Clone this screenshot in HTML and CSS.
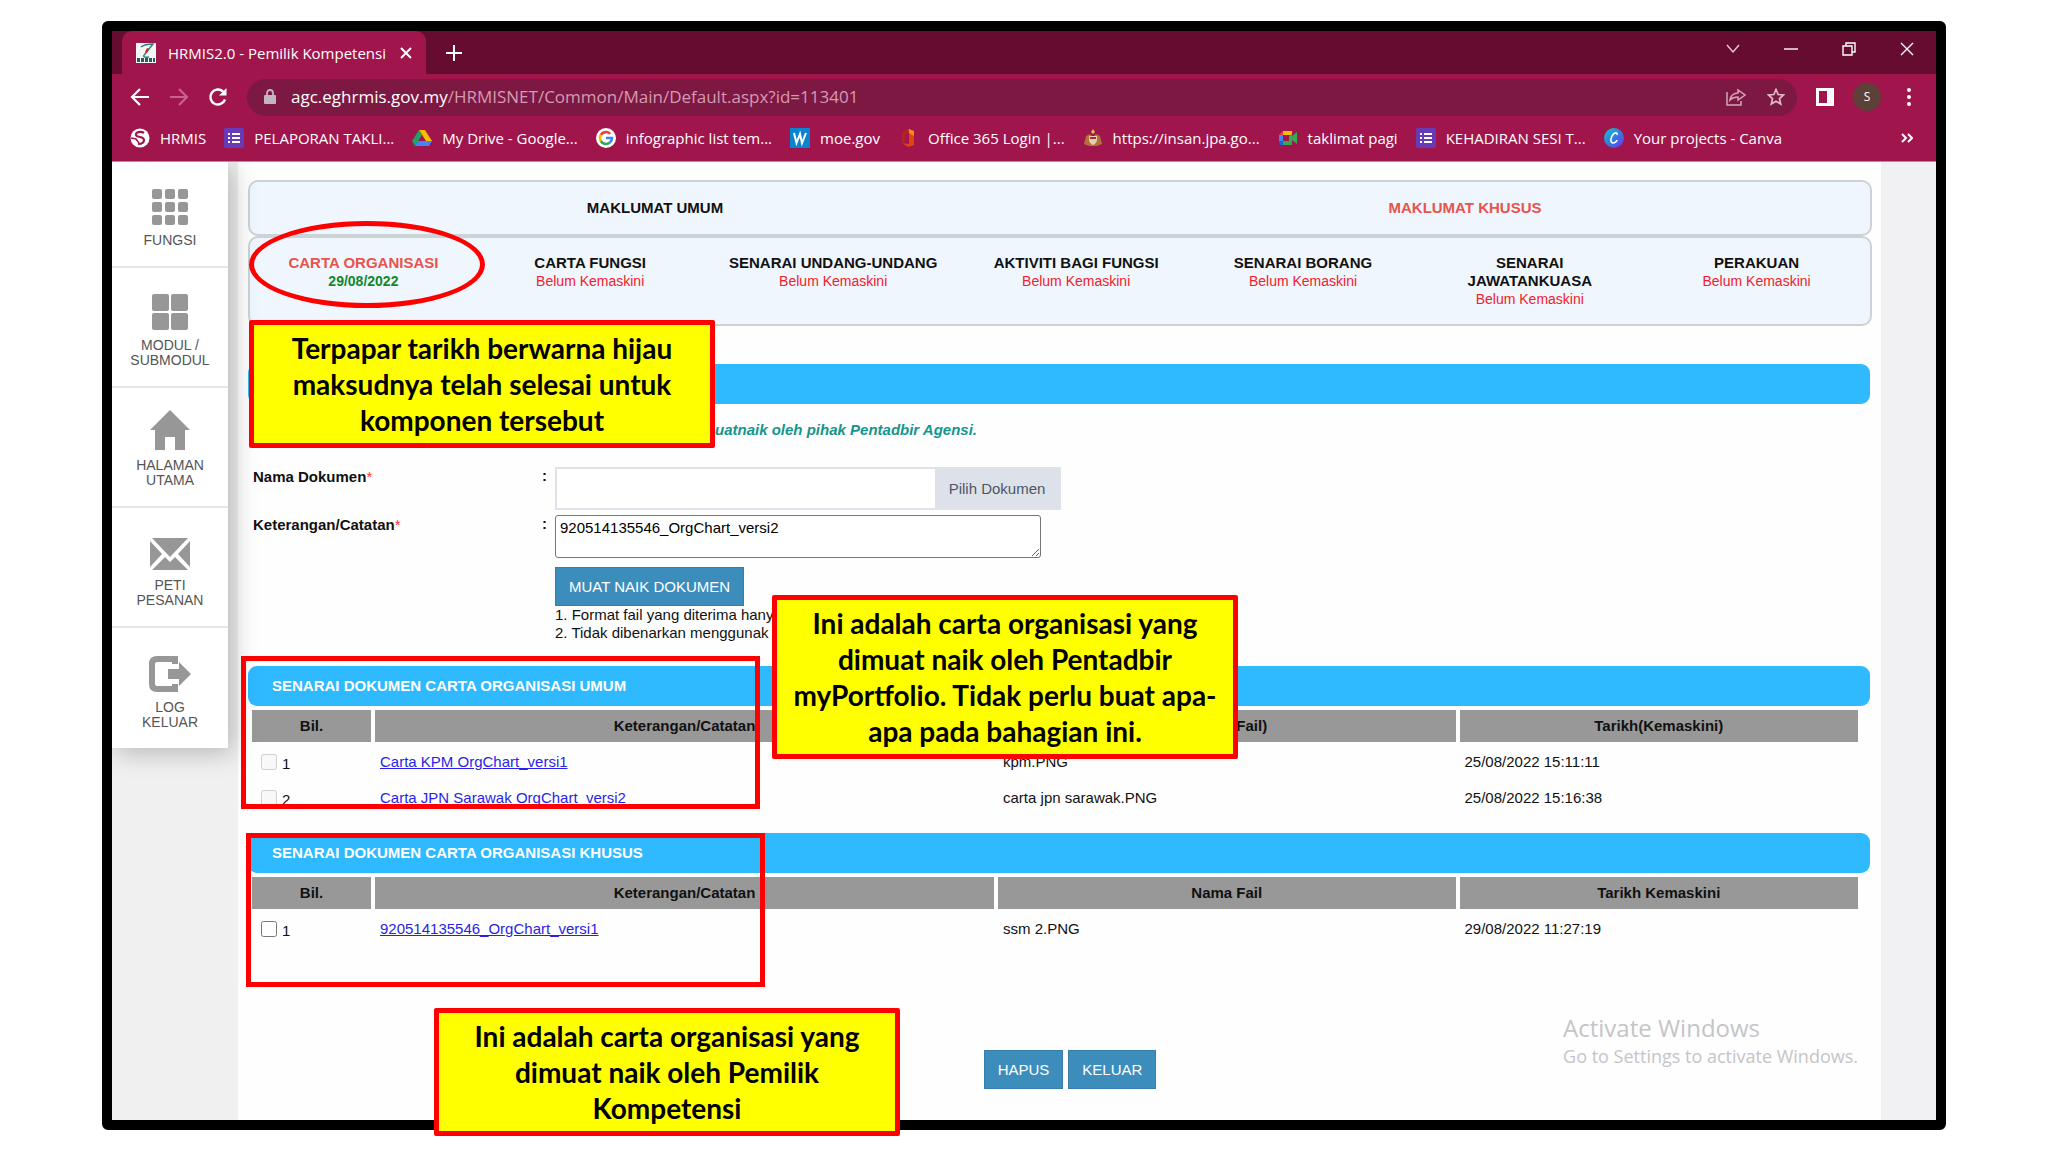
FILE: index.html
```html
<!DOCTYPE html>
<html lang="ms">
<head>
	<meta charset="UTF-8">
	<title>HRMIS2.0 - Pemilik Kompetensi</title>
	<link rel="stylesheet" href="styles.css">
</head>
<body>
	<div class="slide">
		<div class="window">
			<!-- tab strip -->
			<div class="tabstrip">
				<div class="tab">
					<svg class="favicon" viewBox="0 0 20 20"><rect width="20" height="20" fill="#f4f6f5"/><path d="M5 4c4-3 8-3 12-3L9 11c-2 2-2 4 4 3" fill="none" stroke="#2c7f80" stroke-width="1.500"/><path d="M9 9l2-4 2 1-2 4z" fill="#d8231f"/><path d="M1 17h18" stroke="#2b5a5c" stroke-width="4" stroke-dasharray="3 1"/></svg>
					<span>HRMIS2.0 - Pemilik Kompetensi</span>
					<button class="icon-btn close" aria-label="Close tab"><svg width="12" height="12" viewBox="0 0 12 12"><path d="M1 1l10 10M11 1L1 11" stroke="#fff" stroke-width="2"/></svg></button>
				</div>
				<button class="icon-btn newtab" aria-label="New tab"><svg width="16" height="16" viewBox="0 0 16 16"><path d="M8 0v16M0 8h16" stroke="#fff" stroke-width="2"/></svg></button>
				<div class="winbtns">
					<button class="icon-btn" aria-label="Search tabs"><svg width="14" height="14" viewBox="0 0 14 14"><path d="M1 3l6 7 6-7" fill="none" stroke="#e3cdd6" stroke-width="1.4"/></svg></button>
					<button class="icon-btn" aria-label="Minimize"><svg width="14" height="14" viewBox="0 0 14 14"><path d="M0 7h14" stroke="#fff" stroke-width="1.4"/></svg></button>
					<button class="icon-btn" aria-label="Restore"><svg width="14" height="14" viewBox="0 0 14 14"><path d="M1 4h9v9H1zM4 4V1h9v9h-3" fill="none" stroke="#fff" stroke-width="1.4"/></svg></button>
					<button class="icon-btn" aria-label="Close"><svg width="14" height="14" viewBox="0 0 14 14"><path d="M1 1l12 12M13 1L1 13" stroke="#fff" stroke-width="1.4"/></svg></button>
				</div>
			</div>
			<!-- address bar -->
			<div class="toolbar">
				<button class="icon-btn" aria-label="Back"><svg width="20" height="20" viewBox="0 0 20 20"><path d="M19 10H2M10 2l-8 8 8 8" fill="none" stroke="#fff" stroke-width="2.2"/></svg></button>
				<button class="icon-btn" aria-label="Forward"><svg width="20" height="20" viewBox="0 0 20 20"><path d="M1 10h17M10 2l8 8-8 8" fill="none" stroke="#c9608e" stroke-width="2.2"/></svg></button>
				<button class="icon-btn" aria-label="Reload"><svg width="20" height="20" viewBox="0 0 20 20"><path d="M17 12.500a7.500 7.500 0 1 1-2-8" fill="none" stroke="#fff" stroke-width="2.400"/><path d="M18.500 1v7.500H11z" fill="#fff"/></svg></button>
				<div class="address">
					<svg width="12" height="16" viewBox="0 0 12 16"><path d="M3 7V4a3 3 0 0 1 6 0v3" fill="none" stroke="#c3b5c0" stroke-width="1.800"/><rect y="6" width="12" height="9" rx="1" fill="#c3b5c0"/></svg>
					<span class="url"><b>agc.eghrmis.gov.my</b>/HRMISNET/Common/Main/Default.aspx?id=113401</span>
					<button class="icon-btn" aria-label="Share"><svg width="20" height="18" viewBox="0 0 20 18"><path d="M1 4v13h14v-4M4 12c1-5 4-7 8-7V2l7 5-7 5V9c-4 0-6 1-8 3z" fill="none" stroke="#d3a3b8" stroke-width="1.500"/></svg></button>
					<button class="icon-btn" aria-label="Bookmark"><svg width="18" height="18" viewBox="0 0 18 18"><path d="M9 1.500l2.200 5 5.300.5-4 3.600 1.200 5.400L9 13.200 4.300 16l1.200-5.400-4-3.600 5.300-.5z" fill="none" stroke="#e0bccb" stroke-width="1.700"/></svg></button>
				</div>
				<button class="icon-btn" aria-label="Side panel"><svg width="18" height="18" viewBox="0 0 18 18"><path d="M1.500 1.500h15v15h-15z" fill="none" stroke="#fff" stroke-width="3"/><path d="M11 1h6v16h-6z" fill="#fff"/></svg></button>
				<span class="avatar">S</span>
				<button class="icon-btn" aria-label="Menu"><svg width="18" height="18" viewBox="0 0 18 18"><circle cx="9" cy="2" r="2" fill="#fff"/><circle cx="9" cy="9" r="2" fill="#fff"/><circle cx="9" cy="16" r="2" fill="#fff"/></svg></button>
			</div>
			<!-- bookmarks -->
			<div class="bookmarks">
				<a href="#"><svg viewBox="0 0 20 20"><circle cx="10" cy="10" r="9.500" fill="#fff"/><path d="M14 5c-3-2-9-1-8 2s8 1 8 5-4 4-6 4" fill="none" stroke="#a0154b" stroke-width="2.200"/><path d="M1 10l5 1 3 4" fill="none" stroke="#a0154b" stroke-width="1.500"/></svg>HRMIS</a>
				<a href="#"><svg viewBox="0 0 20 20"><rect width="20" height="20" rx="2" fill="#673ab7"/><path d="M4 6h2M4 10h2M4 14h2M8 6h8M8 10h8M8 14h8" stroke="#fff" stroke-width="2"/></svg>PELAPORAN TAKLI...</a>
				<a href="#"><svg viewBox="0 0 20 20"><path d="M7 2h6l7 11h-6z" fill="#fbbc04"/><path d="M7 2l3 5-7 11-3-5z" fill="#1ea362"/><path d="M6 13h14l-3 5H3z" fill="#4285f4"/></svg>My Drive - Google...</a>
				<a href="#"><svg viewBox="0 0 20 20"><circle cx="10" cy="10" r="10" fill="#fff"/><g fill="none" stroke-width="2.600"><path d="M14.200 5.800A6 6 0 0 0 4.800 7" stroke="#ea4335"/><path d="M4.800 7a6 6 0 0 0 0 6" stroke="#fbbc04"/><path d="M4.800 13a6 6 0 0 0 9 1.600" stroke="#34a853"/><path d="M13.800 14.600A6 6 0 0 0 16 10h-6" stroke="#4285f4"/></g></svg>infographic list tem...</a>
				<a href="#"><svg viewBox="0 0 20 20"><rect width="20" height="20" fill="#0a84d0"/><path d="M4 5l2.500 10L10 6l2 9 4-10" fill="none" stroke="#fff" stroke-width="2"/></svg>moe.gov</a>
				<a href="#"><svg viewBox="0 0 20 20"><path d="M10 1L4 4v11l3-2V6l4-1z" fill="#b3242a"/><path d="M10 1l6 2v14l-6 2-6-4 7 1V4z" fill="#e3440c"/><path d="M11 1l5 2v5l-5-3z" fill="#f58a1f"/></svg>Office 365 Login |...</a>
				<a href="#"><svg viewBox="0 0 20 20"><path d="M10 1l2 3-2 2-2-2z" fill="#e8c33c"/><path d="M1 16l2-8 4-2 3 3 3-3 4 2 2 8-5 2H6z" fill="#b3703a"/><path d="M6 8h8v4c0 3-4 5-4 5s-4-2-4-5z" fill="#ddd2b0"/><path d="M7 9h6v2H7z" fill="#b8262d"/></svg>https://insan.jpa.go...</a>
				<a href="#"><svg viewBox="0 0 20 20"><path d="M5 3h9v4H5z" fill="#fbbc04"/><path d="M1 7l4-4v4z" fill="#ea4335"/><path d="M1 7h4v6H1z" fill="#4285f4"/><path d="M1 13h4v4H2z" fill="#1967d2"/><path d="M5 13h6V8l3-2v11H5zM14 8l5-4v12l-5-4z" fill="#34a853"/></svg>taklimat pagi</a>
				<a href="#"><svg viewBox="0 0 20 20"><rect width="20" height="20" rx="2" fill="#673ab7"/><path d="M4 6h2M4 10h2M4 14h2M8 6h8M8 10h8M8 14h8" stroke="#fff" stroke-width="2"/></svg>KEHADIRAN SESI T...</a>
				<a href="#"><svg viewBox="0 0 20 20"><defs><linearGradient id="canva" x1="0" y1="0" x2="1" y2="1"><stop offset="0" stop-color="#10c8c8"/><stop offset=".5" stop-color="#2f7fe0"/><stop offset="1" stop-color="#7d2ae8"/></linearGradient></defs><circle cx="10" cy="10" r="10" fill="url(#canva)"/><path d="M13 7c1-3-3-3-5 1s-1 7 1 7 4-2 4-3" fill="none" stroke="#fff" stroke-width="1.600"/></svg>Your projects - Canva</a>
				<button class="icon-btn more" aria-label="More bookmarks"><svg width="12" height="10" viewBox="0 0 12 10"><path d="M1 1l4 4-4 4M7 1l4 4-4 4" fill="none" stroke="#fff" stroke-width="2"/></svg></button>
			</div>

			<div class="page">
				<div class="side">
					<nav class="sidebar">
						<a href="#" class="first"><svg width="36" height="36" viewBox="0 0 36 36" fill="#979797"><rect width="10" height="10" rx="2"/><rect x="13" width="10" height="10" rx="2"/><rect x="26" width="10" height="10" rx="2"/><rect y="13" width="10" height="10" rx="2"/><rect x="13" y="13" width="10" height="10" rx="2"/><rect x="26" y="13" width="10" height="10" rx="2"/><rect y="26" width="10" height="10" rx="2"/><rect x="13" y="26" width="10" height="10" rx="2"/><rect x="26" y="26" width="10" height="10" rx="2"/></svg>FUNGSI</a>
						<a href="#"><svg width="36" height="36" viewBox="0 0 36 36" fill="#979797"><rect width="17" height="17" rx="2"/><rect x="19" width="17" height="17" rx="2"/><rect y="19" width="17" height="17" rx="2"/><rect x="19" y="19" width="17" height="17" rx="2"/></svg>MODUL /<br>SUBMODUL</a>
						<a href="#"><svg width="40" height="40" viewBox="0 0 40 40" fill="#979797"><path d="M20 0l20 20h-5v20H25V27H15v13H5V20H0z"/></svg>HALAMAN<br>UTAMA</a>
						<a href="#"><svg width="40" height="32" viewBox="0 0 40 32" fill="#979797"><path d="M2 0h36L20 19zM0 3l12 13L0 29zM40 3v26L28 16zM2 32l13-13 5 5 5-5 13 13z"/></svg>PETI<br>PESANAN</a>
						<a href="#"><svg width="42" height="36" viewBox="0 0 42 36"><path d="M26 8V3H8Q3 3 3 8v20q0 5 5 5h18v-5" fill="none" stroke="#979797" stroke-width="6"/><path d="M19 13h11V6l12 12-12 12v-7H19z" fill="#979797"/></svg>LOG<br>KELUAR</a>
					</nav>
				</div>
				<main class="content">
					<div class="panel groups">
						<div>MAKLUMAT UMUM</div>
						<div class="current">MAKLUMAT KHUSUS</div>
					</div>
					<div class="panel steps">
						<div><div class="current">CARTA ORGANISASI</div><span class="done">29/08/2022</span></div>
						<div>CARTA FUNGSI<span>Belum Kemaskini</span></div>
						<div>SENARAI UNDANG-UNDANG<span>Belum Kemaskini</span></div>
						<div>AKTIVITI BAGI FUNGSI<span>Belum Kemaskini</span></div>
						<div>SENARAI BORANG<span>Belum Kemaskini</span></div>
						<div>SENARAI JAWATANKUASA<span>Belum Kemaskini</span></div>
						<div>PERAKUAN<span>Belum Kemaskini</span></div>
					</div>
					<div class="bar top"></div>
					<p class="info">uatnaik oleh pihak Pentadbir Agensi.</p>

					<form class="upload">
						<label for="namaDokumen">Nama Dokumen<i>*</i></label><span class="colon">:</span>
						<div class="file">
							<input type="text" id="namaDokumen">
							<button type="button">Pilih Dokumen</button>
						</div>
						<label for="catatan">Keterangan/Catatan<i>*</i></label><span class="colon">:</span>
						<textarea id="catatan">920514135546_OrgChart_versi2</textarea>
						<div class="actions">
							<button type="button" class="btn">MUAT NAIK DOKUMEN</button>
							<div>1. Format fail yang diterima hany</div>
							<div>2. Tidak dibenarkan menggunak</div>
						</div>
					</form>

					<h2 class="bar">SENARAI DOKUMEN CARTA ORGANISASI UMUM</h2>
					<table class="list">
						<tr><th class="bil">Bil.</th><th>Keterangan/Catatan</th><th class="fail">(Nama Fail)</th><th class="tarikh">Tarikh(Kemaskini)</th></tr>
						<tr>
							<td><input type="checkbox" id="u1" disabled><label for="u1">1</label></td>
							<td><a href="#">Carta KPM OrgChart_versi1</a></td>
							<td>kpm.PNG</td>
							<td>25/08/2022 15:11:11</td>
						</tr>
						<tr>
							<td><input type="checkbox" id="u2" disabled><label for="u2">2</label></td>
							<td><a href="#">Carta JPN Sarawak OrgChart_versi2</a></td>
							<td>carta jpn sarawak.PNG</td>
							<td>25/08/2022 15:16:38</td>
						</tr>
					</table>

					<h2 class="bar">SENARAI DOKUMEN CARTA ORGANISASI KHUSUS</h2>
					<table class="list">
						<tr><th class="bil">Bil.</th><th>Keterangan/Catatan</th><th class="fail">Nama Fail</th><th class="tarikh">Tarikh Kemaskini</th></tr>
						<tr>
							<td><input type="checkbox" id="k1"><label for="k1">1</label></td>
							<td><a href="#">920514135546_OrgChart_versi1</a></td>
							<td>ssm 2.PNG</td>
							<td>29/08/2022 11:27:19</td>
						</tr>
					</table>
					<div class="footer">
						<button type="button" class="btn">HAPUS</button>
						<button type="button" class="btn">KELUAR</button>
					</div>
				</main>
			</div>
			<div class="watermark">Activate Windows<small>Go to Settings to activate Windows.</small></div>
		</div>

		<!-- notes drawn over the window -->
		<div class="mark oval"></div>
		<div class="mark umum"></div>
		<div class="mark khusus"></div>
		<div class="callout c1">Terpapar tarikh berwarna hijau<br>maksudnya telah selesai untuk<br>komponen tersebut</div>
		<div class="callout c2">Ini adalah carta organisasi yang<br>dimuat naik oleh Pentadbir<br>myPortfolio. Tidak perlu buat apa-<br>apa pada bahagian ini.</div>
		<div class="callout c3">Ini adalah carta organisasi yang<br>dimuat naik oleh Pemilik<br>Kompetensi</div>
	</div>
</body>
</html>
```
FILE: styles.css
```css
* {
	box-sizing: border-box;
}
body {
	margin: 0;
	background: #fff;
	font-family: "Liberation Sans", Arial, sans-serif;
	font-size: 15px;
	line-height: 18px;
	color: #111;
}
button, input, textarea {
	font: inherit;
	margin: 0;
}
a {
	color: inherit;
}
.slide {
	position: relative;
	min-width: 1500px;
	min-height: 100vh;
	padding: 21px 102px 22px;
}
.window {
	position: relative;
	display: flex;
	flex-direction: column;
	min-height: calc(100vh - 43px);
	border: 10px solid #000;
	border-radius: 6px;
	background: #a0154b;
}

/* browser chrome */
.tabstrip, .toolbar, .bookmarks, .address, .tab, .winbtns {
	display: flex;
	align-items: center;
}
.tabstrip, .toolbar, .bookmarks {
	font-family: "Open Sans", "Noto Sans", sans-serif;
	color: #fff;
}
.icon-btn {
	display: flex;
	padding: 0;
	border: 0;
	background: none;
}
.tabstrip {
	height: 43px;
	padding: 0 22px 0 10px;
	background: #660c30;
}
.tab {
	align-self: stretch;
	width: 304px;
	padding: 0 14px;
	border-radius: 10px 10px 0 0;
	background: #a0154b;
}
.tab span {
	flex: 1;
	white-space: nowrap;
}
.favicon {
	width: 20px;
	height: 20px;
	margin-right: 12px;
}
.newtab {
	margin-left: 20px;
}
.winbtns {
	align-self: flex-start;
	gap: 44px;
	height: 36px;
	margin-left: auto;
}
.toolbar {
	gap: 19px;
	height: 46px;
	padding: 0 18px;
}
.address {
	flex: 1;
	gap: 15px;
	height: 37px;
	padding: 0 12px 0 17px;
	border-radius: 19px;
	background: #7d1842;
}
.address .icon-btn {
	margin-left: 6px;
}
.url {
	flex: 1;
	font-size: 17px;
	color: #d59ab4;
}
.url b {
	font-weight: normal;
	color: #fff;
}
.avatar {
	width: 28px;
	height: 28px;
	border-radius: 50%;
	background: #5d4037;
	font-size: 12px;
	line-height: 28px;
	text-align: center;
}
.bookmarks {
	gap: 18px;
	height: 42px;
	padding: 0 23px 5px 18px;
	border-bottom: 1px solid #d0809f;
}
.bookmarks a {
	display: flex;
	align-items: center;
	gap: 10px;
	white-space: nowrap;
	text-decoration: none;
}
.bookmarks a svg {
	width: 20px;
	height: 20px;
}
.more {
	margin-left: auto;
}

/* HRMIS page */
.page {
	display: flex;
	flex: 1;
	padding-right: 55px;
	background: #f1f1f3;
}
.side {
	width: 126px;
	background: #f0f0f0;
}
.sidebar {
	position: relative;
	width: 116px;
	background: #fff;
	box-shadow: 4px 4px 24px rgba(0, 0, 0, .25);
	clip-path: inset(0 -40px -40px 0);
}
.sidebar a {
	display: flex;
	flex-direction: column;
	align-items: center;
	justify-content: flex-end;
	height: 120px;
	padding-bottom: 18px;
	border-bottom: 2px solid #e6e6e6;
	font-size: 14px;
	line-height: 15px;
	text-align: center;
	text-decoration: none;
	color: #555;
}
.sidebar .first {
	height: 106px;
}
.sidebar a:last-child {
	border-bottom: 0;
}
.sidebar svg {
	margin-bottom: 8px;
}
.content {
	flex: 1;
	padding: 18px 9px 0 10px;
	background: #fefefe;
}
.panel {
	display: grid;
	border: 2px solid #cbd3d6;
	border-radius: 10px;
	background: #f0f6fd;
	font-weight: bold;
	text-align: center;
}
.groups {
	grid-template-columns: 1fr 1fr;
	padding: 17px 0;
}
.steps {
	grid-template-columns: 14% 14% 16% 14% 14% 14% 14%;
	padding: 16px 0;
	min-height: 89px;
}
.steps > div {
	padding: 0 18px;
}
.steps span {
	display: block;
	font-size: 14px;
	font-weight: normal;
	color: #f2202a;
}
.current {
	color: #e8534e;
}
.steps .done {
	font-weight: bold;
	color: #10882c;
}
.bar {
	height: 40px;
	margin: 15px 2px 0 0;
	padding-left: 24px;
	border-radius: 9px;
	background: #2fb9ff;
	font-size: 15px;
	line-height: 40px;
	color: #fff;
}
.bar.top {
	margin-top: 38px;
}
.info {
	margin: 17px 0 0 467px;
	font-weight: bold;
	font-style: italic;
	color: #16958d;
}
.upload {
	display: grid;
	grid-template-columns: 288px 19px 1fr;
	row-gap: 5px;
	margin: 28px 0 24px;
}
.upload label {
	padding: 1px 0 0 5px;
	font-weight: bold;
}
.upload i {
	font-style: normal;
	font-weight: normal;
	color: #f33;
}
.colon {
	padding-left: 6px;
	font-weight: bold;
}
.file {
	display: flex;
	width: 506px;
	height: 43px;
	border: 2px solid #dfe3e9;
}
.file input {
	flex: 1;
	min-width: 0;
	border: 0;
	background: #fff;
}
.file button {
	width: 124px;
	padding: 0;
	border: 0;
	background: #dde2ea;
	color: #4c5564;
}
.upload textarea {
	width: 486px;
	height: 43px;
	padding: 3px 4px;
	border: 1px solid #767676;
	border-radius: 3px;
	background: #fff;
}
.actions {
	grid-column: 3;
	padding-top: 4px;
}
.btn {
	height: 39px;
	padding: 0 13px;
	border: 1px solid #367fa9;
	background: #3c8dbc;
	color: #fff;
}
.actions .btn {
	display: block;
}
.list {
	width: calc(100% - 10px);
	border-spacing: 4px;
	table-layout: fixed;
}
.list th {
	height: 32px;
	padding: 0;
	background: #989898;
}
.list td {
	height: 32px;
	padding: 0 5px;
}
.list td a {
	color: #2a1fe8;
}
.list .bil {
	width: 119px;
}
.list .fail {
	width: 28.7%;
}
.list .tarikh {
	width: 25%;
}
.list input {
	width: 16px;
	height: 16px;
	margin: 0 5px 0 4px;
	vertical-align: middle;
}
.list label {
	vertical-align: -3px;
}
.footer {
	display: flex;
	justify-content: center;
	gap: 5px;
	margin: 101px 0 30px 20px;
}
.watermark {
	position: absolute;
	right: 78px;
	bottom: 51px;
	font-family: "Open Sans", "Noto Sans", sans-serif;
	font-size: 24px;
	line-height: 30px;
	color: #c5c5c8;
}
.watermark small {
	display: block;
	font-size: 18px;
	line-height: 26px;
}

/* red marks and yellow notes */
.mark {
	position: absolute;
	border: 5px solid #fe0000;
}
.oval {
	left: 249px;
	top: 221px;
	width: 236px;
	height: 87px;
	border-radius: 50%;
}
.umum {
	left: 241px;
	top: 656px;
	width: 519px;
	height: 153px;
}
.khusus {
	left: 246px;
	top: 833px;
	width: 519px;
	height: 154px;
}
.callout {
	position: absolute;
	width: 466px;
	padding: 5px 0;
	border: 5px solid #fe0000;
	border-radius: 2px;
	background: #ff0;
	font-family: Lato, "Open Sans", sans-serif;
	font-size: 28px;
	font-weight: bold;
	line-height: 36px;
	text-align: center;
	white-space: nowrap;
	color: #000;
}
.c1 {
	left: 249px;
	top: 320px;
}
.c2 {
	left: 772px;
	top: 595px;
}
.c3 {
	left: 434px;
	top: 1008px;
}
```
